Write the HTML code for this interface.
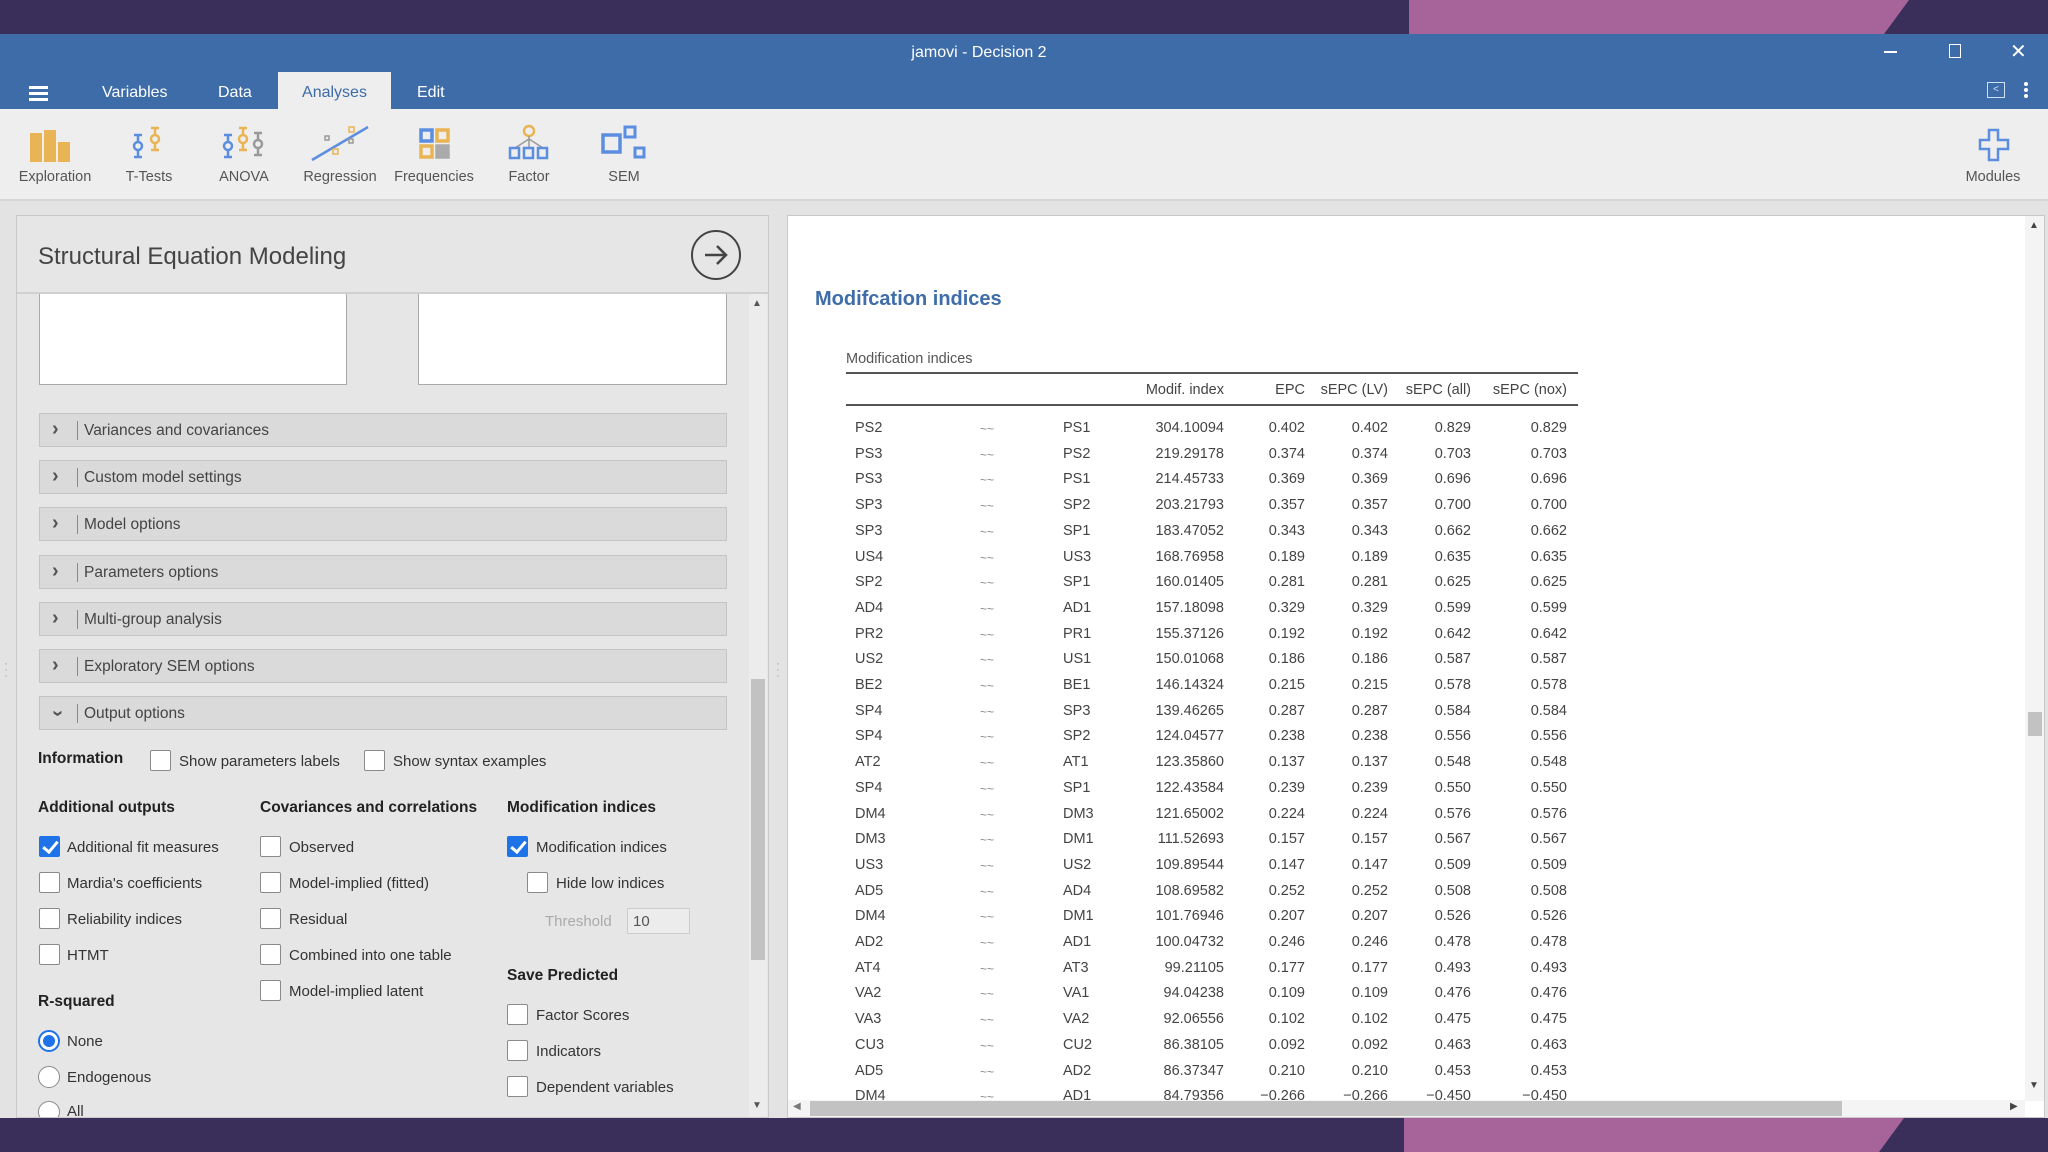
<!DOCTYPE html>
<html><head><meta charset="utf-8"><style>
*{margin:0;padding:0;box-sizing:border-box}
body{width:2048px;height:1152px;overflow:hidden;background:#e3e3e3;font-family:"Liberation Sans",sans-serif;position:relative;color:#333}
.a{position:absolute}
.t{position:absolute;white-space:nowrap}
.bar{position:absolute;left:39px;width:688px;height:34px;background:#dadada;border:1px solid #c4c4c4;font-size:15.5px;color:#444}
.bar .ch{position:absolute;left:12px;top:4px;font-size:20px;font-weight:bold;color:#555}
.bar .sep{position:absolute;left:37px;top:7px;width:1px;height:19px;background:#888}
.bar .lb{position:absolute;left:44px;top:8px}
.cb{position:absolute;width:21px;height:21px;border:1px solid #8a8a8a;background:#fff;border-radius:2px}
.cb.on{background:#1e73e8;border-color:#1e73e8}
.cb.on:after{content:"";position:absolute;left:6px;top:1px;width:6px;height:12px;border:solid #fff;border-width:0 3px 3px 0;transform:rotate(40deg)}
.lab{position:absolute;font-size:15px;color:#333;white-space:nowrap}
.hd{position:absolute;font-size:15.5px;font-weight:bold;color:#222;white-space:nowrap}
.rd{position:absolute;width:22px;height:22px;border:1px solid #8a8a8a;border-radius:50%;background:#fff}
.rd.on{border:2px solid #1e73e8}
.rd.on:after{content:"";position:absolute;left:3px;top:3px;width:12px;height:12px;border-radius:50%;background:#1e73e8}
.tb{position:absolute;top:169px;font-size:14.5px;color:#555;text-align:center;width:110px;margin-left:-55px}
.row{position:absolute;left:0;width:2048px;height:25px;font-size:14.5px;color:#444}
.row span{position:absolute;top:0}
</style></head><body>
<div class="a" style="left:0;top:0;width:2048px;height:34px;background:#3a2e5a"></div>
<div class="a" style="left:1409px;top:0;width:500px;height:34px;background:#a6649a;clip-path:polygon(0 0,100% 0,95% 100%,0 100%)"></div>
<div class="a" style="left:0;top:34px;width:2048px;height:75px;background:#3d6ca8"></div>
<div class="t" style="left:0;width:1958px;text-align:center;top:44px;font-size:16px;color:#fff">jamovi - Decision 2</div>
<div class="a" style="left:1884px;top:51px;width:13px;height:1.5px;background:#fff"></div>
<div class="a" style="left:1949px;top:44px;width:12px;height:14px;border:1.5px solid #fff"></div>
<div class="t" style="left:2010px;top:39px;font-size:20px;color:#fff">✕</div>
<div class="a" style="left:29px;top:86px;width:19px;height:3px;background:#fff;box-shadow:0 6px 0 #fff,0 12px 0 #fff"></div>
<div class="t" style="left:102px;top:84px;font-size:16px;color:#fff">Variables</div>
<div class="t" style="left:218px;top:84px;font-size:16px;color:#fff">Data</div>
<div class="a" style="left:278px;top:72px;width:113px;height:37px;background:#eeeeee"></div>
<div class="t" style="left:278px;width:113px;text-align:center;top:84px;font-size:16px;color:#3d6ca8">Analyses</div>
<div class="t" style="left:417px;top:84px;font-size:16px;color:#fff">Edit</div>
<div class="a" style="left:1987px;top:82px;width:18px;height:16px;border:1.5px solid #cfe0f5;font-size:10px;color:#cfe0f5;line-height:13px;text-align:center">&lt;</div>
<div class="a" style="left:2024px;top:82px;width:4px;height:4px;border-radius:50%;background:#fff;box-shadow:0 6px 0 #fff,0 12px 0 #fff"></div>
<div class="a" style="left:0;top:109px;width:2048px;height:92px;background:#eeeeee;border-bottom:2px solid #d6d6d6"></div>
<svg class="a" style="left:0;top:123px" width="700" height="50">
<g fill="#e9b453"><rect x="30" y="10" width="12" height="29"/><rect x="44" y="7" width="12" height="32"/><rect x="58" y="19" width="12" height="20"/></g>
<g stroke-width="2.5" fill="none"><path d="M138 12v22M134 12h8M134 34h8" stroke="#5b8ee0"/><circle cx="138" cy="23" r="4" fill="#eee" stroke="#5b8ee0"/><path d="M155 5v22M151 5h8M151 27h8" stroke="#e9b453"/><circle cx="155" cy="16" r="4" fill="#eee" stroke="#e9b453"/>
<path d="M228 12v22M224 12h8M224 34h8" stroke="#5b8ee0"/><circle cx="228" cy="23" r="4" fill="#eee" stroke="#5b8ee0"/><path d="M243 5v22M239 5h8M239 27h8" stroke="#e9b453"/><circle cx="243" cy="16" r="4" fill="#eee" stroke="#e9b453"/><path d="M258 10v22M254 10h8M254 32h8" stroke="#999"/><circle cx="258" cy="21" r="4" fill="#eee" stroke="#999"/>
<path d="M312 37L368 4" stroke="#5b8ee0"/><rect x="349" y="4" width="5" height="5" stroke="#e9b453" stroke-width="1.5"/><rect x="333" y="26" width="5" height="5" stroke="#e9b453" stroke-width="1.5"/><rect x="325" y="13" width="4" height="4" stroke="#999" stroke-width="1.5"/><rect x="349" y="16" width="4" height="4" stroke="#999" stroke-width="1.5"/>
<rect x="421" y="7" width="11" height="11" stroke="#5b8ee0" stroke-width="3.5"/><rect x="437" y="7" width="11" height="11" stroke="#e9b453" stroke-width="3.5"/><rect x="421" y="23" width="11" height="11" stroke="#e9b453" stroke-width="3.5"/><rect x="437" y="23" width="11" height="11" fill="#aaa" stroke="#aaa" stroke-width="3.5"/>
<circle cx="529" cy="8" r="5" stroke="#e9b453"/><path d="M529 13v12M529 16L515 25M529 16L543 25" stroke="#999" stroke-width="1.5"/><rect x="510" y="25" width="9" height="10" stroke="#5b8ee0"/><rect x="524" y="25" width="9" height="10" stroke="#5b8ee0"/><rect x="538" y="25" width="9" height="10" stroke="#5b8ee0"/>
<rect x="603" y="12" width="17" height="17" stroke="#5b8ee0" stroke-width="3.5"/><rect x="625" y="4" width="10" height="10" stroke="#5b8ee0" stroke-width="3"/><rect x="635" y="25" width="9" height="9" stroke="#5b8ee0" stroke-width="3"/></g>
</svg>
<div class="tb" style="left:55px">Exploration</div><div class="tb" style="left:149px">T-Tests</div><div class="tb" style="left:244px">ANOVA</div><div class="tb" style="left:340px">Regression</div><div class="tb" style="left:434px">Frequencies</div><div class="tb" style="left:529px">Factor</div><div class="tb" style="left:624px">SEM</div><div class="tb" style="left:1993px">Modules</div>
<svg class="a" style="left:1978px;top:128px" width="32" height="34"><path d="M11 2h9v10h10v9h-10v11h-9v-11h-9v-9h9z" fill="none" stroke="#5b8ee0" stroke-width="2.5"/></svg>
<div class="a" style="left:16px;top:215px;width:753px;height:903px;background:#e6e6e6;border:1px solid #c8c8c8"></div>
<div class="t" style="left:38px;top:243px;font-size:24px;color:#444">Structural Equation Modeling</div>
<div class="a" style="left:691px;top:230px;width:50px;height:50px;border:2.5px solid #444;border-radius:50%"></div>
<svg class="a" style="left:691px;top:230px" width="50" height="50"><path d="M14 25h21M26 16l9 9-9 9" fill="none" stroke="#444" stroke-width="2.5"/></svg>
<div class="a" style="left:17px;top:292px;width:751px;height:2px;background:#d0d0d0"></div>
<div class="a" style="left:39px;top:294px;width:308px;height:91px;background:#fff;border:1px solid #aaa;border-top:none"></div>
<div class="a" style="left:418px;top:294px;width:309px;height:91px;background:#fff;border:1px solid #aaa;border-top:none"></div>
<div class="a" style="left:749px;top:294px;width:18px;height:823px;background:#ececec"></div>
<div class="a" style="left:751px;top:679px;width:14px;height:281px;background:#c2c2c2"></div>
<div class="t" style="left:752px;top:298px;font-size:10px;color:#555">▲</div>
<div class="t" style="left:752px;top:1100px;font-size:10px;color:#555">▼</div>
<div class="bar" style="top:413px"><span class="ch">›</span><span class="sep"></span><span class="lb">Variances and covariances</span></div>
<div class="bar" style="top:460px"><span class="ch">›</span><span class="sep"></span><span class="lb">Custom model settings</span></div>
<div class="bar" style="top:507px"><span class="ch">›</span><span class="sep"></span><span class="lb">Model options</span></div>
<div class="bar" style="top:555px"><span class="ch">›</span><span class="sep"></span><span class="lb">Parameters options</span></div>
<div class="bar" style="top:602px"><span class="ch">›</span><span class="sep"></span><span class="lb">Multi-group analysis</span></div>
<div class="bar" style="top:649px"><span class="ch">›</span><span class="sep"></span><span class="lb">Exploratory SEM options</span></div>
<div class="bar" style="top:696px"><span class="ch" style="top:5px;left:14px;transform:rotate(90deg)">›</span><span class="sep"></span><span class="lb">Output options</span></div>
<div class="hd" style="left:38px;top:750px">Information</div>
<div class="cb" style="left:150px;top:750px"></div><div class="lab" style="left:179px;top:753px">Show parameters labels</div>
<div class="cb" style="left:364px;top:750px"></div><div class="lab" style="left:393px;top:753px">Show syntax examples</div>
<div class="hd" style="left:38px;top:799px">Additional outputs</div>
<div class="hd" style="left:260px;top:799px">Covariances and correlations</div>
<div class="hd" style="left:507px;top:799px">Modification indices</div>
<div class="cb on" style="left:39px;top:836px"></div><div class="lab" style="left:67px;top:839px">Additional fit measures</div>
<div class="cb" style="left:39px;top:872px"></div><div class="lab" style="left:67px;top:875px">Mardia's coefficients</div>
<div class="cb" style="left:39px;top:908px"></div><div class="lab" style="left:67px;top:911px">Reliability indices</div>
<div class="cb" style="left:39px;top:944px"></div><div class="lab" style="left:67px;top:947px">HTMT</div>
<div class="cb" style="left:260px;top:836px"></div><div class="lab" style="left:289px;top:839px">Observed</div>
<div class="cb" style="left:260px;top:872px"></div><div class="lab" style="left:289px;top:875px">Model-implied (fitted)</div>
<div class="cb" style="left:260px;top:908px"></div><div class="lab" style="left:289px;top:911px">Residual</div>
<div class="cb" style="left:260px;top:944px"></div><div class="lab" style="left:289px;top:947px">Combined into one table</div>
<div class="cb" style="left:260px;top:980px"></div><div class="lab" style="left:289px;top:983px">Model-implied latent</div>
<div class="cb on" style="left:507px;top:836px"></div><div class="lab" style="left:536px;top:839px">Modification indices</div>
<div class="cb" style="left:527px;top:872px"></div><div class="lab" style="left:556px;top:875px">Hide low indices</div>
<div class="lab" style="left:545px;top:913px;color:#aaa">Threshold</div>
<div class="a" style="left:627px;top:908px;width:63px;height:26px;border:1px solid #ccc;background:#ececec;font-size:15px;padding:4px 5px;color:#555">10</div>
<div class="hd" style="left:507px;top:967px">Save Predicted</div>
<div class="cb" style="left:507px;top:1004px"></div><div class="lab" style="left:536px;top:1007px">Factor Scores</div>
<div class="cb" style="left:507px;top:1040px"></div><div class="lab" style="left:536px;top:1043px">Indicators</div>
<div class="cb" style="left:507px;top:1076px"></div><div class="lab" style="left:536px;top:1079px">Dependent variables</div>
<div class="hd" style="left:38px;top:993px">R-squared</div>
<div class="rd on" style="left:38px;top:1030px"></div><div class="lab" style="left:67px;top:1033px">None</div>
<div class="rd" style="left:38px;top:1066px"></div><div class="lab" style="left:67px;top:1069px">Endogenous</div>
<div class="a" style="left:17px;top:1100px;width:730px;height:17px;overflow:hidden"><div class="rd" style="left:21px;top:1px"></div><div class="lab" style="left:50px;top:3px">All</div></div>
<div class="a" style="left:787px;top:215px;width:1258px;height:903px;background:#fff;border:1px solid #c8c8c8"></div>
<div class="a" style="left:2025px;top:216px;width:19px;height:885px;background:#f4f4f4"></div>
<div class="a" style="left:2028px;top:712px;width:14px;height:24px;background:#c2c2c2"></div>
<div class="t" style="left:2029px;top:220px;font-size:10px;color:#444">▲</div>
<div class="t" style="left:2029px;top:1080px;font-size:10px;color:#444">▼</div>
<div class="a" style="left:788px;top:1100px;width:1237px;height:17px;background:#f4f4f4"></div>
<div class="a" style="left:810px;top:1101px;width:1032px;height:15px;background:#c2c2c2"></div>
<div class="t" style="left:793px;top:1101px;font-size:10px;color:#777">◀</div>
<div class="t" style="left:2010px;top:1101px;font-size:10px;color:#444">▶</div>
<div class="t" style="left:815px;top:288px;font-size:20px;font-weight:bold;color:#3e6da9">Modifcation indices</div>
<div class="t" style="left:846px;top:351px;font-size:14.5px;color:#555">Modification indices</div>
<div class="a" style="left:846px;top:372px;width:732px;height:2px;background:#555"></div>
<div class="a" style="left:846px;top:404px;width:732px;height:2px;background:#555"></div>
<div class="row" style="top:382px"><span style="left:1084px;width:140px;text-align:right">Modif. index</span><span style="left:1225px;width:80px;text-align:right">EPC</span><span style="left:1308px;width:80px;text-align:right">sEPC (LV)</span><span style="left:1391px;width:80px;text-align:right">sEPC (all)</span><span style="left:1467px;width:100px;text-align:right">sEPC (nox)</span></div>
<div class="a" id="tb" style="left:0;top:0;width:2025px;height:1100px;overflow:hidden"></div>
<script>
var d=`PS2 PS1 304.10094 0.402 0.402 0.829 0.829
PS3 PS2 219.29178 0.374 0.374 0.703 0.703
PS3 PS1 214.45733 0.369 0.369 0.696 0.696
SP3 SP2 203.21793 0.357 0.357 0.700 0.700
SP3 SP1 183.47052 0.343 0.343 0.662 0.662
US4 US3 168.76958 0.189 0.189 0.635 0.635
SP2 SP1 160.01405 0.281 0.281 0.625 0.625
AD4 AD1 157.18098 0.329 0.329 0.599 0.599
PR2 PR1 155.37126 0.192 0.192 0.642 0.642
US2 US1 150.01068 0.186 0.186 0.587 0.587
BE2 BE1 146.14324 0.215 0.215 0.578 0.578
SP4 SP3 139.46265 0.287 0.287 0.584 0.584
SP4 SP2 124.04577 0.238 0.238 0.556 0.556
AT2 AT1 123.35860 0.137 0.137 0.548 0.548
SP4 SP1 122.43584 0.239 0.239 0.550 0.550
DM4 DM3 121.65002 0.224 0.224 0.576 0.576
DM3 DM1 111.52693 0.157 0.157 0.567 0.567
US3 US2 109.89544 0.147 0.147 0.509 0.509
AD5 AD4 108.69582 0.252 0.252 0.508 0.508
DM4 DM1 101.76946 0.207 0.207 0.526 0.526
AD2 AD1 100.04732 0.246 0.246 0.478 0.478
AT4 AT3 99.21105 0.177 0.177 0.493 0.493
VA2 VA1 94.04238 0.109 0.109 0.476 0.476
VA3 VA2 92.06556 0.102 0.102 0.475 0.475
CU3 CU2 86.38105 0.092 0.092 0.463 0.463
AD5 AD2 86.37347 0.210 0.210 0.453 0.453
DM4 AD1 84.79356 −0.266 −0.266 −0.450 −0.450`.split("\n");
var h="",R=[1224,1305,1388,1471,1567];
d.forEach(function(l,i){var c=l.split(" ");var y=420+i*25.7;
h+='<div class="row" style="top:'+y+'px"><span style="left:855px">'+c[0]+'</span><span style="left:980px;color:#888;font-size:12px;top:2px">~~</span><span style="left:1063px">'+c[1]+'</span>';
for(var k=0;k<5;k++)h+='<span style="left:'+(R[k]-110)+'px;width:110px;text-align:right">'+c[k+2]+'</span>';
h+='</div>';});
document.getElementById("tb").innerHTML=h;
</script>
<div class="a" style="left:0;top:1118px;width:2048px;height:34px;background:#3a2e5a"></div>
<div class="a" style="left:1404px;top:1118px;width:500px;height:34px;background:#a6649a;clip-path:polygon(0 0,100% 0,95% 100%,0 100%)"></div>
<div class="t" style="left:4px;top:660px;font-size:12px;color:#aaa;line-height:6px">·<br>·<br>·</div>
<div class="t" style="left:776px;top:660px;font-size:12px;color:#aaa;line-height:6px">·<br>·<br>·</div>
</body></html>
